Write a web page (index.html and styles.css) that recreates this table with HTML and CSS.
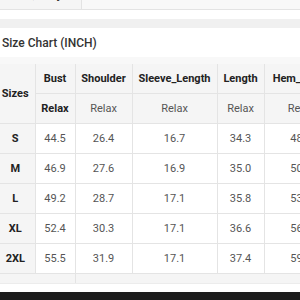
FILE: index.html
```html
<!DOCTYPE html>
<html>
<head>
<meta charset="utf-8">
<link rel="stylesheet" href="styles.css">
</head>
<body>
<div class="page">
  <div class="card top-card">
    <div class="top-row">
      <div class="top-label"><span>Quality</span></div>
      <div class="top-value"></div>
    </div>
  </div>
  <div class="card chart-card">
    <div class="chart-title">Size Chart (INCH)</div>
    <div class="table-wrap">
      <table class="size-table">
        <colgroup>
          <col class="c-size"><col class="c-bust"><col class="c-shoulder"><col class="c-sleeve"><col class="c-length"><col class="c-hem">
        </colgroup>
        <tr class="r-head">
          <th class="size-cell" rowspan="2">Sizes</th>
          <th>Bust</th><th>Shoulder</th><th>Sleeve_Length</th><th>Length</th><th>Hem_Width</th>
        </tr>
        <tr class="r-sub">
          <th>Relax</th><td class="sub">Relax</td><td class="sub">Relax</td><td class="sub">Relax</td><td class="sub">Relax</td>
        </tr>
        <tr><th class="size-cell">S</th><td>44.5</td><td>26.4</td><td>16.7</td><td>34.3</td><td>48.8</td></tr>
        <tr><th class="size-cell">M</th><td>46.9</td><td>27.6</td><td>16.9</td><td>35.0</td><td>50.8</td></tr>
        <tr><th class="size-cell">L</th><td>49.2</td><td>28.7</td><td>17.1</td><td>35.8</td><td>53.1</td></tr>
        <tr><th class="size-cell">XL</th><td>52.4</td><td>30.3</td><td>17.1</td><td>36.6</td><td>56.3</td></tr>
        <tr><th class="size-cell">2XL</th><td>55.5</td><td>31.9</td><td>17.1</td><td>37.4</td><td>59.4</td></tr>
      </table>
      <div class="scroll-strip"><span class="strip-a"></span><span class="strip-b"></span></div>
    </div>
  </div>
  <div class="bottom-bar"></div>
</div>
</body>
</html>
```

FILE: styles.css
```css
html, body {
  margin: 0;
  padding: 0;
}
body {
  width: 300px;
  height: 300px;
  overflow: hidden;
  background: #f0f0f0;
  font-family: Roboto, "Liberation Sans", sans-serif;
}
.page {
  display: flex;
  flex-direction: column;
  width: 300px;
  height: 300px;
}
.card {
  background: #ffffff;
}
.top-card {
  height: 19px;
  overflow: hidden;
}
.top-row {
  display: flex;
  height: 9px;
  border-bottom: 1px solid #e3e3e3;
  overflow: hidden;
}
.top-label {
  width: 81px;
  background: #f5f5f5;
  border-right: 1px solid #e3e3e3;
  overflow: hidden;
}
.top-label span {
  display: block;
  margin-top: -11px;
  text-align: right;
  padding-right: 19px;
  font-size: 11px;
  line-height: 14px;
  font-weight: 700;
  color: #222;
}
.top-value {
  flex: 1;
  background: #f8f8f8;
}
.chart-card {
  margin-top: 9px;
  flex: 1;
  display: flex;
  flex-direction: column;
  min-height: 0;
}
.chart-title {
  height: 29px;
  display: flex;
  align-items: center;
  padding-left: 2px;
  font-size: 12px;
  font-weight: 500;
  color: #333;
  background: #fff;
}
.table-wrap {
  padding-top: 7px;
  background: #f8f8f8;
  overflow: hidden;
}
.size-table {
  border-collapse: collapse;
  table-layout: fixed;
  width: 338px;
  background: #fff;
}
.c-size { width: 35px; }
.c-bust { width: 40px; }
.c-shoulder { width: 57px; }
.c-sleeve { width: 85px; }
.c-length { width: 47px; }
.c-hem { width: 74px; }
.size-table th,
.size-table td {
  border: 1px solid #e4e4e4;
  height: 29px;
  padding: 0;
  text-align: center;
  font-size: 11px;
  white-space: nowrap;
  overflow: visible;
}
.size-table tr:first-child th,
.size-table tr:first-child td {
  border-top: none;
}
.size-table th {
  font-weight: 700;
  color: #222;
  background: #f5f5f5;
}
.size-table .size-cell {
  border-left: none;
  padding-right: 4px;
}
.size-table td {
  color: #555;
  background: #fff;
}
.size-table td.sub {
  background: #f5f5f5;
  color: #555;
}
.scroll-strip {
  display: flex;
  height: 9px;
  background: #f5f5f5;
  border-bottom: 1px solid #ececec;
}
.strip-a {
  width: 75px;
  border-right: 1px solid #e4e4e4;
}
.strip-b {
  flex: 1;
}
.bottom-bar {
  height: 8px;
  background: #1c1c1c;
  margin-top: auto;
}
```
